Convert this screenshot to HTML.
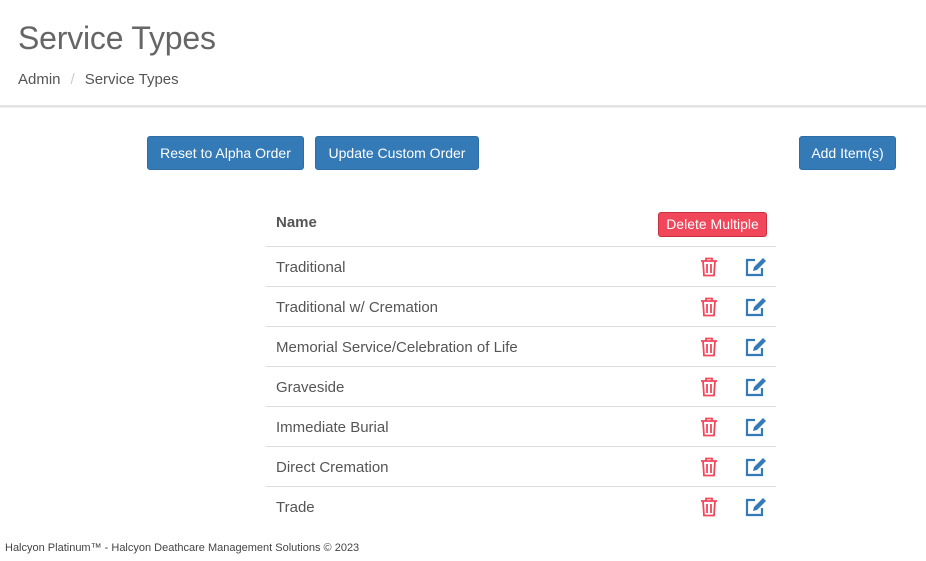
<!DOCTYPE html>
<html><head><style>
body{margin:0;width:926px;height:561px;background:#fff;font-family:"Liberation Sans",sans-serif;color:#555;position:relative;overflow:hidden}
.a{position:absolute}
h1{position:absolute;left:18px;top:20px;margin:0;font-weight:normal;font-size:32px;color:#666;letter-spacing:-0.2px}
.bc{left:18px;top:71px;font-size:15px;color:#555}
.bc span{color:#ccc;margin:0 10px}
.hr{left:0;top:105px;width:926px;height:2px;background:#e3e3e3;border-bottom:1px solid #eee}
.btn{position:absolute;background:#337ab7;border:1px solid #2e6da4;border-radius:3px;color:#fff;font-size:14px;text-align:center;line-height:32px;height:32px;box-sizing:border-box}
.del{position:absolute;left:658px;top:212px;width:109px;height:25px;background:#f0475b;border:1px solid #c9303f;border-radius:3px;color:#fff;font-size:14px;line-height:23px;text-align:center;box-sizing:border-box}
.row{position:absolute;left:266px;width:510px;height:40px;border-top:1px solid #ddd;font-size:15px;line-height:40px;box-sizing:border-box;padding-left:10px;color:#555}
.row span{position:relative;top:1px}
.row svg{position:absolute;top:10px}
.foot{left:5px;top:542px;font-size:11px;color:#444}
</style></head><body>
<h1>Service Types</h1>
<div class="a bc">Admin<span>/</span>Service Types</div>
<div class="a hr"></div>
<div class="btn" style="left:147px;top:136px;width:157px;height:34px;line-height:32px">Reset to Alpha Order</div>
<div class="btn" style="left:315px;top:136px;width:164px;height:34px">Update Custom Order</div>
<div class="btn" style="left:799px;top:136px;width:97px;height:34px">Add Item(s)</div>
<div class="a" style="left:276px;top:214px;font-size:15px;font-weight:bold;color:#555">Name</div>
<div class="del">Delete Multiple</div>
<div id="rows"></div>
<script>
var n=["Traditional","Traditional w/ Cremation","Memorial Service/Celebration of Life","Graveside","Immediate Burial","Direct Cremation","Trade"];
var h="";
var trash='<svg style="left:434px" width="18" height="20" viewBox="0 0 18 20"><g fill="none" stroke="#f0475b" stroke-width="1.8"><path d="M1 4h16M6 4V1.5h6V4M3 4l1 14.5h10L15 4"/><path d="M7 7v9M11 7v9"/></g></svg>';
var edit='<svg style="left:479px" width="22" height="20" viewBox="0 0 22 20"><g fill="none" stroke="#337ab7" stroke-width="2.2"><path d="M10 3H2v15h15v-7"/></g><path d="M18 1l3 3-9 9-4 1 1-4z" fill="#337ab7"/></svg>';
n.forEach(function(t,i){h+='<div class="row" style="top:'+(246+40*i)+'px"><span>'+t+'</span>'+trash+edit+'</div>';});
document.getElementById("rows").innerHTML=h;
</script>
<div class="a foot">Halcyon Platinum™ - Halcyon Deathcare Management Solutions © 2023</div>
</body></html>
